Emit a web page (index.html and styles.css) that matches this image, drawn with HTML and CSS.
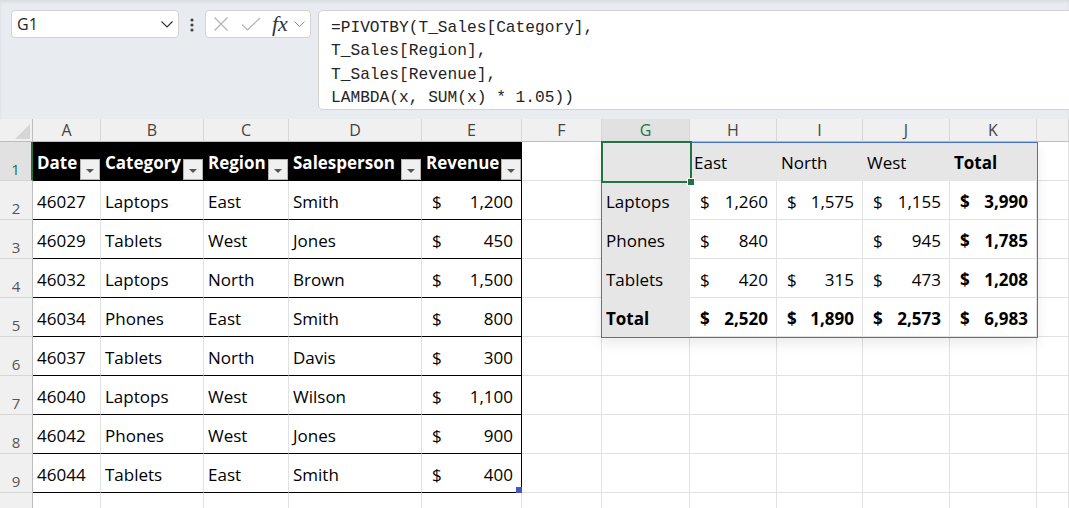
FILE: index.html
```html
<!DOCTYPE html>
<html lang="en">
<head>
    <meta charset="UTF-8">
    <title>PIVOTBY - Sales</title>
    <link rel="stylesheet" href="styles.css">
</head>
<body>
    <div class="topbar">
        <div class="namebox">
            <span>G1</span>
            <svg width="12" height="7" viewBox="0 0 12 7"><path d="M0.5 0.5 L6 6 L11.5 0.5" stroke="#333" stroke-width="1.2" fill="none"/></svg>
        </div>
        <svg class="dots" width="4" height="14" viewBox="0 0 4 14"><circle cx="2" cy="2" r="1.6"/><circle cx="2" cy="7" r="1.6"/><circle cx="2" cy="12" r="1.6"/></svg>
        <div class="fxbtns">
            <svg class="ico-x" width="16" height="14" viewBox="0 0 16 14"><path d="M1.5 0.5 L14.5 13.5 M14.5 0.5 L1.5 13.5" stroke="#b4b4b4" stroke-width="1.2" fill="none"/></svg>
            <svg class="ico-ok" width="20" height="14" viewBox="0 0 20 14"><path d="M1 7.5 L6.5 13 L19 1" stroke="#b4b4b4" stroke-width="1.2" fill="none"/></svg>
            <span class="fx">fx</span>
            <svg class="ico-dd" width="11" height="6" viewBox="0 0 11 6"><path d="M0.5 0.5 L5.5 5.5 L10.5 0.5" stroke="#8a8a8a" fill="none"/></svg>
        </div>
        <div class="formula">
            <div>=PIVOTBY(T_Sales[Category],</div>
            <div>T_Sales[Region],</div>
            <div>T_Sales[Revenue],</div>
            <div>LAMBDA(x, SUM(x) * 1.05))</div>
        </div>
    </div>

    <div class="sheet">
        <!-- column headers -->
        <div class="corner"><svg width="15" height="15" viewBox="0 0 15 15"><polygon points="15,0 15,15 0,15" fill="#d6d6d6"/></svg></div>
        <div class="ch">A</div>
        <div class="ch">B</div>
        <div class="ch">C</div>
        <div class="ch">D</div>
        <div class="ch">E</div>
        <div class="ch">F</div>
        <div class="ch on">G</div>
        <div class="ch">H</div>
        <div class="ch">I</div>
        <div class="ch">J</div>
        <div class="ch">K</div>
        <div class="ch"></div>

        <!-- row 1 -->
        <div class="rh on">1</div>
        <div class="c th">Date<span class="flt"></span></div>
        <div class="c th">Category<span class="flt"></span></div>
        <div class="c th">Region<span class="flt"></span></div>
        <div class="c th">Salesperson<span class="flt"></span></div>
        <div class="c th">Revenue<span class="flt"></span></div>
        <div class="c"></div>
        <div class="c pv"></div>
        <div class="c pv">East</div>
        <div class="c pv">North</div>
        <div class="c pv">West</div>
        <div class="c pv b">Total</div>
        <div class="c"></div>

        <!-- row 2 -->
        <div class="rh">2</div>
        <div class="c td">46027</div>
        <div class="c td">Laptops</div>
        <div class="c td">East</div>
        <div class="c td">Smith</div>
        <div class="c td last acct"><span>$</span><span>1,200</span></div>
        <div class="c"></div>
        <div class="c pv">Laptops</div>
        <div class="c acct"><span>$</span><span>1,260</span></div>
        <div class="c acct"><span>$</span><span>1,575</span></div>
        <div class="c acct"><span>$</span><span>1,155</span></div>
        <div class="c acct b"><span>$</span><span>3,990</span></div>
        <div class="c"></div>

        <!-- row 3 -->
        <div class="rh">3</div>
        <div class="c td">46029</div>
        <div class="c td">Tablets</div>
        <div class="c td">West</div>
        <div class="c td">Jones</div>
        <div class="c td last acct"><span>$</span><span>450</span></div>
        <div class="c"></div>
        <div class="c pv">Phones</div>
        <div class="c acct"><span>$</span><span>840</span></div>
        <div class="c"></div>
        <div class="c acct"><span>$</span><span>945</span></div>
        <div class="c acct b"><span>$</span><span>1,785</span></div>
        <div class="c"></div>

        <!-- row 4 -->
        <div class="rh">4</div>
        <div class="c td">46032</div>
        <div class="c td">Laptops</div>
        <div class="c td">North</div>
        <div class="c td">Brown</div>
        <div class="c td last acct"><span>$</span><span>1,500</span></div>
        <div class="c"></div>
        <div class="c pv">Tablets</div>
        <div class="c acct"><span>$</span><span>420</span></div>
        <div class="c acct"><span>$</span><span>315</span></div>
        <div class="c acct"><span>$</span><span>473</span></div>
        <div class="c acct b"><span>$</span><span>1,208</span></div>
        <div class="c"></div>

        <!-- row 5 -->
        <div class="rh">5</div>
        <div class="c td">46034</div>
        <div class="c td">Phones</div>
        <div class="c td">East</div>
        <div class="c td">Smith</div>
        <div class="c td last acct"><span>$</span><span>800</span></div>
        <div class="c"></div>
        <div class="c pv b">Total</div>
        <div class="c acct b"><span>$</span><span>2,520</span></div>
        <div class="c acct b"><span>$</span><span>1,890</span></div>
        <div class="c acct b"><span>$</span><span>2,573</span></div>
        <div class="c acct b"><span>$</span><span>6,983</span></div>
        <div class="c"></div>

        <!-- row 6 -->
        <div class="rh">6</div>
        <div class="c td">46037</div>
        <div class="c td">Tablets</div>
        <div class="c td">North</div>
        <div class="c td">Davis</div>
        <div class="c td last acct"><span>$</span><span>300</span></div>
        <div class="c"></div><div class="c"></div><div class="c"></div><div class="c"></div><div class="c"></div><div class="c"></div><div class="c"></div>

        <!-- row 7 -->
        <div class="rh">7</div>
        <div class="c td">46040</div>
        <div class="c td">Laptops</div>
        <div class="c td">West</div>
        <div class="c td">Wilson</div>
        <div class="c td last acct"><span>$</span><span>1,100</span></div>
        <div class="c"></div><div class="c"></div><div class="c"></div><div class="c"></div><div class="c"></div><div class="c"></div><div class="c"></div>

        <!-- row 8 -->
        <div class="rh">8</div>
        <div class="c td">46042</div>
        <div class="c td">Phones</div>
        <div class="c td">West</div>
        <div class="c td">Jones</div>
        <div class="c td last acct"><span>$</span><span>900</span></div>
        <div class="c"></div><div class="c"></div><div class="c"></div><div class="c"></div><div class="c"></div><div class="c"></div><div class="c"></div>

        <!-- row 9 -->
        <div class="rh">9</div>
        <div class="c td">46044</div>
        <div class="c td">Tablets</div>
        <div class="c td">East</div>
        <div class="c td">Smith</div>
        <div class="c td last acct end"><span>$</span><span>400</span><i class="rsz"></i></div>
        <div class="c"></div><div class="c"></div><div class="c"></div><div class="c"></div><div class="c"></div><div class="c"></div><div class="c"></div>

        <!-- row 10, only its top edge is in view -->
        <div class="rh"></div>
        <div class="c"></div><div class="c"></div><div class="c"></div><div class="c"></div><div class="c"></div><div class="c"></div>
        <div class="c"></div><div class="c"></div><div class="c"></div><div class="c"></div><div class="c"></div><div class="c"></div>

        <div class="spill"></div>
        <div class="sel"></div>
    </div>
</body>
</html>
```

FILE: styles.css
```css
body {
    margin: 0;
    font-family: 'Open Sans', sans-serif;
    background: #fff;
    overflow: hidden;
}
.topbar {
    height: 119px;
    box-sizing: border-box;
    background: #e8ecf0;
    box-shadow: inset 0 2px 3px rgba(0, 0, 0, 0.07);
    padding: 10px 0 0 11px;
    display: flex;
    align-items: flex-start;
}
.namebox {
    width: 168px;
    height: 28px;
    box-sizing: border-box;
    background: #fff;
    border: 1px solid #d3d3d3;
    border-radius: 4px;
    display: flex;
    align-items: center;
    justify-content: space-between;
    padding: 0 5px;
    font-size: 16px;
    color: #242424;
}
.dots {
    margin: 8px 0 0 11px;
    fill: #444;
}
.fxbtns {
    margin-left: 11px;
    width: 106px;
    height: 28px;
    box-sizing: border-box;
    background: #fff;
    border: 1px solid #d3d3d3;
    border-radius: 4px;
    display: flex;
    align-items: center;
    padding-left: 7px;
}
.ico-ok {
    margin-left: 12px;
}
.fx {
    margin-left: 11px;
    font-family: 'Liberation Serif', serif;
    font-style: italic;
    font-size: 22px;
    line-height: 1;
    color: #333;
}
.ico-dd {
    margin-left: 6px;
}
.formula {
    flex: 1;
    margin: 0 -10px 0 7px;
    height: 100px;
    box-sizing: border-box;
    background: #fff;
    border: 1px solid #d3d3d3;
    border-radius: 5px;
    padding: 6px 12px;
    font-family: 'Liberation Mono', monospace;
    font-size: 16.2px;
    line-height: 23.33px;
    color: #242424;
}
.sheet {
    position: relative;
    display: grid;
    grid-template-columns: 33px 68px 103px 85px 133px 100px 80px 88px 87px 86px 87px 87px 1fr;
    grid-template-rows: 23px repeat(10, 39px);
}
.corner {
    background: #f0f0f0;
    border-right: 1px solid #bdbdbd;
    border-bottom: 1px solid #bdbdbd;
    display: flex;
    justify-content: flex-end;
    align-items: flex-end;
    padding: 0 2px 2px 0;
}
.ch {
    background: #f0f0f0;
    border-right: 1px solid #d6d6d6;
    border-bottom: 1px solid #bdbdbd;
    display: flex;
    justify-content: center;
    align-items: center;
    font-size: 16px;
    color: #444;
}
.ch.on {
    background: #e1e1e1;
    color: #217346;
}
.rh {
    background: #f0f0f0;
    border-right: 1px solid #bdbdbd;
    border-bottom: 1px solid #d6d6d6;
    display: flex;
    justify-content: center;
    align-items: flex-end;
    padding-bottom: 1px;
    font-size: 15px;
    line-height: 20px;
    color: #555;
}
.rh.on {
    background: #e1e1e1;
    color: #217346;
    border-right: 2px solid #217346;
}
.c {
    border-right: 1px solid #e1e1e1;
    border-bottom: 1px solid #e1e1e1;
    display: flex;
    align-items: flex-end;
    padding: 0 4px 6px;
    font-size: 17px;
    line-height: 23px;
    white-space: nowrap;
    overflow: hidden;
    color: #000;
}
.td {
    border-bottom-color: #000;
}
.last {
    border-right-color: #000;
}
.th {
    background: #000;
    border-color: #000;
    color: #fff;
    font-weight: 700;
    justify-content: space-between;
    padding-right: 0;
}
.flt {
    width: 20px;
    height: 21px;
    box-sizing: border-box;
    margin-bottom: -6px;
    background: #f0f0f0;
    border: 1px solid #b3b3b3;
    display: flex;
    justify-content: center;
    align-items: center;
    padding-top: 3px;
}
.flt::after {
    content: '';
    border-left: 4px solid transparent;
    border-right: 4px solid transparent;
    border-top: 4px solid #555;
}
.acct {
    justify-content: space-between;
    padding: 0 8px 6px 10px;
}
.pv {
    background: #e6e6e6;
    border-color: #e6e6e6;
}
.b {
    font-weight: 700;
}
.end {
    position: relative;
    overflow: visible;
}
.rsz {
    position: absolute;
    right: -1px;
    bottom: -1px;
    width: 6px;
    height: 6px;
    background: #4259b8;
}
.spill {
    position: absolute;
    left: 601px;
    top: 23px;
    width: 437px;
    height: 196px;
    box-sizing: border-box;
    border: 1px solid #4472c4;
    box-shadow: 0 6px 12px rgba(0, 0, 0, 0.08);
    pointer-events: none;
}
.sel {
    position: absolute;
    left: 601px;
    top: 22px;
    width: 91px;
    height: 42px;
    box-sizing: border-box;
    border: 2px solid #217346;
    pointer-events: none;
}
.sel::after {
    content: '';
    position: absolute;
    right: -5px;
    bottom: -5px;
    width: 6px;
    height: 6px;
    background: #217346;
    border: 1px solid #fff;
}
```
